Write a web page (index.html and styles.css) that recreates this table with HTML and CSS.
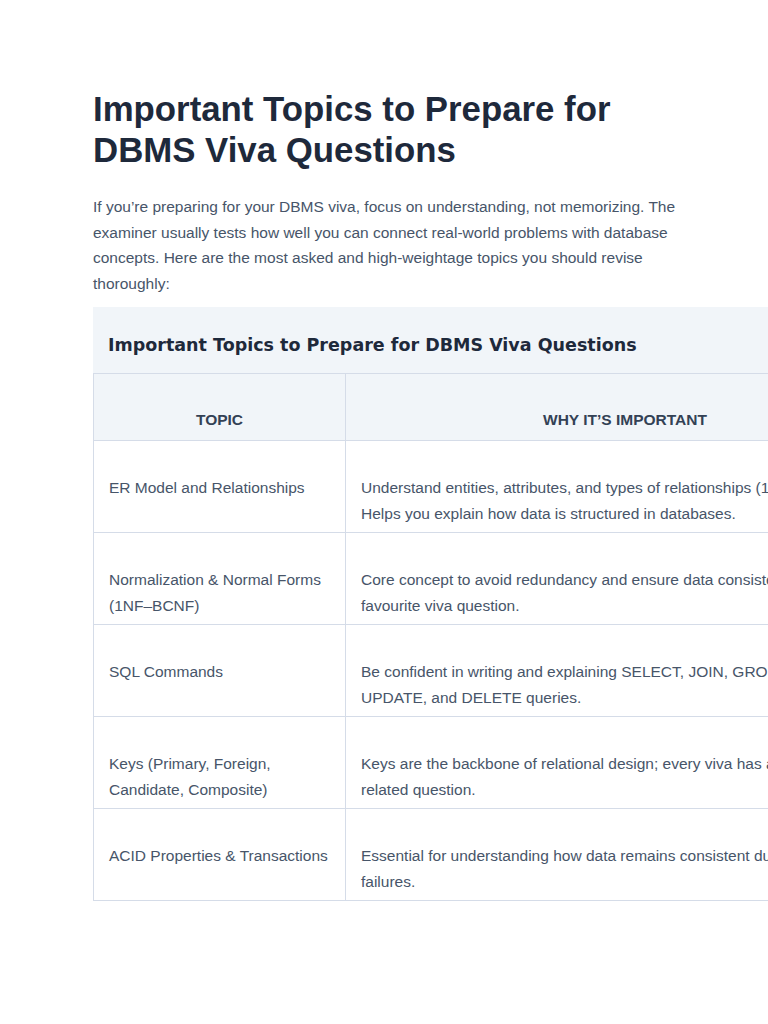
FILE: index.html
```
<!DOCTYPE html>
<html lang="en">
<head>
<meta charset="utf-8">
<title>Important Topics to Prepare for DBMS Viva Questions</title>
<link rel="stylesheet" href="styles.css">
</head>
<body>
<main class="article">
  <h2 class="title">Important Topics to Prepare for DBMS Viva Questions</h2>
  <p class="intro">If you’re preparing for your DBMS viva, focus on understanding, not memorizing. The examiner usually tests how well you can connect real-world problems with database concepts. Here are the most asked and high-weightage topics you should revise thoroughly:</p>
  <figure class="table-wrap">
    <table class="topics">
      <caption>Important Topics to Prepare for DBMS Viva Questions</caption>
      <colgroup><col class="c1"><col class="c2"></colgroup>
      <thead>
        <tr><th>Topic</th><th>Why It’s Important</th></tr>
      </thead>
      <tbody>
        <tr><td>ER Model and Relationships</td><td class="why">Understand entities, attributes, and types of relationships (1:1, 1:N). Helps you explain how data is structured in databases.</td></tr>
        <tr><td>Normalization &amp; Normal Forms (1NF–BCNF)</td><td class="why">Core concept to avoid redundancy and ensure data consistency; a favourite viva question.</td></tr>
        <tr><td>SQL Commands</td><td class="why">Be confident in writing and explaining SELECT, JOIN, GROUP BY, UPDATE, and DELETE queries.</td></tr>
        <tr><td>Keys (Primary, Foreign, Candidate, Composite)</td><td class="why">Keys are the backbone of relational design; every viva has a tricky key-related question.</td></tr>
        <tr><td>ACID Properties &amp; Transactions</td><td class="why">Essential for understanding how data remains consistent during system failures.</td></tr>
      </tbody>
    </table>
  </figure>
</main>
</body>
</html>
```
FILE: styles.css
```
html, body {
  margin: 0;
  padding: 0;
  background: #ffffff;
  overflow-x: hidden;
}
body {
  font-family: "Liberation Sans", Arial, sans-serif;
  color: #475569;
}
.article {
  width: 590px;
  padding: 88px 93px 100px 93px;
}
.title {
  margin: 0 0 24px;
  font-size: 34.8px;
  line-height: 41px;
  font-weight: 700;
  color: #1e293b;
}
.intro {
  margin: 0 0 10px;
  font-size: 15.5px;
  line-height: 25.7px;
  color: #475569;
}
.table-wrap {
  margin: 0;
  width: 812px;
  background: #f1f5f9;
}
.topics {
  width: 812px;
  border-collapse: collapse;
  table-layout: fixed;
  font-size: 15.5px;
  line-height: 26px;
}
.topics caption {
  text-align: left;
  padding: 26px 15px 15px;
  font-family: "DejaVu Sans", Verdana, sans-serif;
  font-weight: 700;
  font-size: 17.5px;
  line-height: 25px;
  color: #1e293b;
  background: #f1f5f9;
}
.c1 { width: 252px; }
.topics th,
.topics td {
  border: 1px solid #d5dce8;
  padding: 34px 15px 5px;
  vertical-align: top;
}
.topics th {
  background: #f1f5f9;
  color: #334155;
  font-weight: 700;
  text-transform: uppercase;
  text-align: center;
  padding-top: 33px;
  padding-bottom: 7px;
}
.topics td {
  background: #ffffff;
  color: #475569;
  text-align: left;
}
.topics td.why {
  padding-right: 44px;
}
```
